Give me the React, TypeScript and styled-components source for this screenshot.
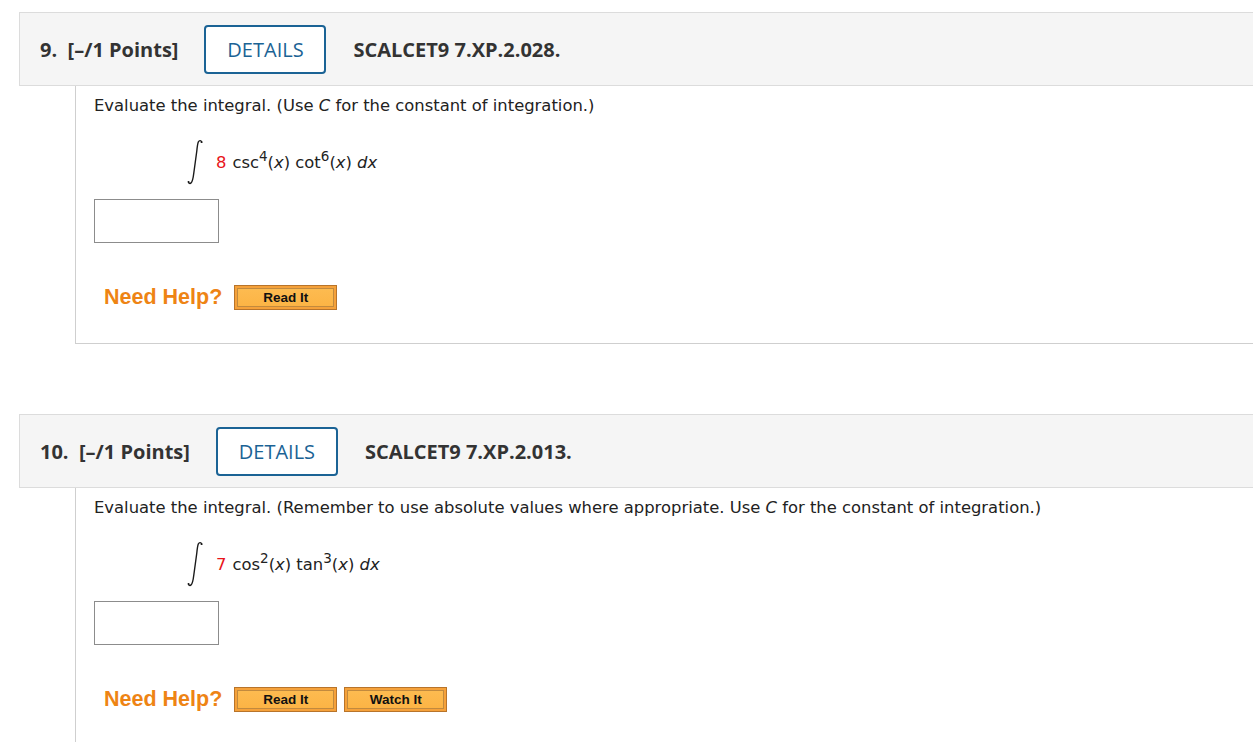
import React from "react";
import styled, { createGlobalStyle } from "styled-components";

const Global = createGlobalStyle`
  html, body { margin: 0; padding: 0; background: #fff; overflow: hidden; }
  body { width: 1253px; height: 742px; }
`;

const Page = styled.div`
  padding: 12px 0 0 19px;
  width: 1300px;
`;

const Question = styled.section<{ $gap?: number }>`
  margin-bottom: ${(p) => p.$gap ?? 0}px;
`;

const Header = styled.div`
  display: flex;
  align-items: center;
  height: 72px;
  padding-left: 20px;
  background: #f5f5f5;
  border: 1px solid #dcdcdc;
  font-family: "Open Sans", sans-serif;
  color: #333;
`;

const Num = styled.span`
  font-weight: 700;
  font-size: 20px;
  white-space: pre;
`;

const DetailsBtn = styled.button`
  margin-left: 26px;
  width: 122px;
  height: 49px;
  border: 2px solid #1b6395;
  border-radius: 4px;
  background: #fff;
  color: #1b6395;
  font-family: "Open Sans", sans-serif;
  font-size: 20px;
  padding: 0;
`;

const Code = styled.span`
  margin-left: 27px;
  font-weight: 700;
  font-size: 20px;
`;

const Body = styled.div<{ $h: number }>`
  margin-left: 56px;
  height: ${(p) => p.$h}px;
  border-left: 1px solid #cfcfcf;
  border-bottom: 1px solid #cfcfcf;
  padding: 11px 0 0 18px;
  box-sizing: border-box;
  font-family: "DejaVu Sans", Verdana, sans-serif;
  font-size: 16.4px;
  color: #222;
`;

const Prompt = styled.p`
  margin: 0;
  line-height: 18px;
`;

const MathRow = styled.div`
  display: flex;
  align-items: center;
  margin: 23px 0 0 93px;
  height: 48px;
`;

const IntegralSign = styled.svg`
  width: 16px;
  height: 46px;
  margin-right: 13px;
  flex: none;
`;

const Coef = styled.span`
  color: #e8141a;
  margin-right: 6px;
`;

const Sup = styled.sup`
  font-size: 13.5px;
  vertical-align: 7px;
  line-height: 0;
`;

const Answer = styled.div`
  margin-top: 13px;
  width: 125px;
  height: 44px;
  box-sizing: border-box;
  border: 1px solid #8c8c8c;
  background: #fff;
`;

const HelpRow = styled.div`
  display: flex;
  align-items: center;
  gap: 7px;
  margin: 42px 0 0 10px;
`;

const Need = styled.span`
  font-family: "Liberation Sans", Arial, sans-serif;
  font-weight: 700;
  font-size: 21.5px;
  color: #ee8414;
  margin-right: 5px;
`;

const HelpBtn = styled.span`
  display: inline-flex;
  width: 103px;
  height: 25px;
  box-sizing: border-box;
  padding: 2px;
  border: 1px solid #b8742a;
  background: #f5a13a;
`;

const HelpInner = styled.span`
  flex: 1;
  display: flex;
  align-items: center;
  justify-content: center;
  border: 1px solid #c28a3e;
  background: linear-gradient(#fdbb50, #fcb445);
  font-family: "Liberation Sans", Arial, sans-serif;
  font-weight: 700;
  font-size: 13.5px;
  color: #111;
`;

const It = styled.i`
  font-style: italic;
`;

function Integral() {
  return (
    <IntegralSign viewBox="0 0 16 46">
      <path
        d="M14.8 3 C14 1.2 12.2 1.2 11.4 2.8 C10.6 4.5 10.2 8 9.8 12 L6.8 34 C6.2 39 5.4 42.5 4.2 43.8 C3.1 45 1.8 44.4 1.4 43"
        fill="none"
        stroke="#1a1a1a"
        strokeWidth="1.4"
        strokeLinecap="round"
      />
      <circle cx="14.5" cy="3.2" r="0.9" fill="#1a1a1a" />
      <circle cx="1.6" cy="42.8" r="0.9" fill="#1a1a1a" />
    </IntegralSign>
  );
}

export default function App() {
  return (
    <>
      <Global />
      <Page>
        <Question $gap={70}>
          <Header>
            <Num>9.  [–/1 Points]</Num>
            <DetailsBtn>DETAILS</DetailsBtn>
            <Code>SCALCET9 7.XP.2.028.</Code>
          </Header>
          <Body $h={258}>
            <Prompt>
              Evaluate the integral. (Use <It>C</It> for the constant of integration.)
            </Prompt>
            <MathRow>
              <Integral />
              <Coef>8</Coef>
              <span>
                csc<Sup>4</Sup>(<It>x</It>) cot<Sup>6</Sup>(<It>x</It>) <It>dx</It>
              </span>
            </MathRow>
            <Answer />
            <HelpRow>
              <Need>Need Help?</Need>
              <HelpBtn>
                <HelpInner>Read It</HelpInner>
              </HelpBtn>
            </HelpRow>
          </Body>
        </Question>
        <Question>
          <Header>
            <Num>10.  [–/1 Points]</Num>
            <DetailsBtn>DETAILS</DetailsBtn>
            <Code>SCALCET9 7.XP.2.013.</Code>
          </Header>
          <Body $h={300}>
            <Prompt>
              Evaluate the integral. (Remember to use absolute values where appropriate. Use <It>C</It> for the constant of integration.)
            </Prompt>
            <MathRow>
              <Integral />
              <Coef>7</Coef>
              <span>
                cos<Sup>2</Sup>(<It>x</It>) tan<Sup>3</Sup>(<It>x</It>) <It>dx</It>
              </span>
            </MathRow>
            <Answer />
            <HelpRow>
              <Need>Need Help?</Need>
              <HelpBtn>
                <HelpInner>Read It</HelpInner>
              </HelpBtn>
              <HelpBtn>
                <HelpInner>Watch It</HelpInner>
              </HelpBtn>
            </HelpRow>
          </Body>
        </Question>
      </Page>
    </>
  );
}
